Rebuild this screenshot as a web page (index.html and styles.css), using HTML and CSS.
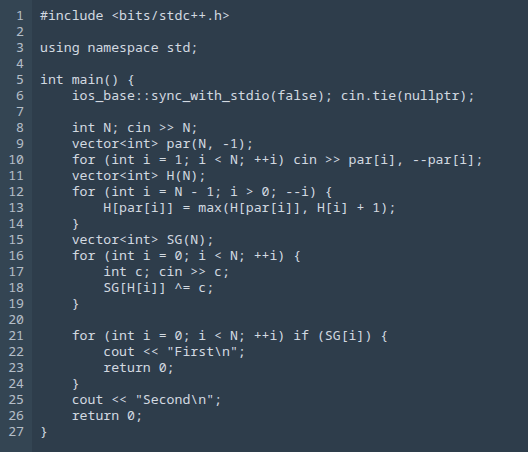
FILE: index.html
```html
<!DOCTYPE html>
<html>
<head>
<meta charset="utf-8">
<link rel="stylesheet" href="styles.css">
</head>
<body>
<div class="editor">
<pre class="gutter">1
2
3
4
5
6
7
8
9
10
11
12
13
14
15
16
17
18
19
20
21
22
23
24
25
26
27</pre>
<pre class="code">#include &lt;bits/stdc++.h&gt;

using namespace std;

int main() {
    ios_base::sync_with_stdio(false); cin.tie(nullptr);

    int N; cin &gt;&gt; N;
    vector&lt;int&gt; par(N, -1);
    for (int i = 1; i &lt; N; ++i) cin &gt;&gt; par[i], --par[i];
    vector&lt;int&gt; H(N);
    for (int i = N - 1; i &gt; 0; --i) {
        H[par[i]] = max(H[par[i]], H[i] + 1);
    }
    vector&lt;int&gt; SG(N);
    for (int i = 0; i &lt; N; ++i) {
        int c; cin &gt;&gt; c;
        SG[H[i]] ^= c;
    }

    for (int i = 0; i &lt; N; ++i) if (SG[i]) {
        cout &lt;&lt; "First\n";
        return 0;
    }
    cout &lt;&lt; "Second\n";
    return 0;
}</pre>
</div>
</body>
</html>
```
FILE: styles.css
```css
html, body {
  margin: 0;
  padding: 0;
  height: 100%;
  background: #2e3d4b;
}
.editor {
  display: flex;
  min-height: 452px;
  width: 528px;
  background: #2e3d4b;
}
pre {
  margin: 0;
  font-family: "Noto Sans Mono", "DejaVu Sans Mono", monospace;
  font-size: 13.2px;
  line-height: 16px;
  padding-top: 7px;
}
.gutter {
  width: 32px;
  box-sizing: border-box;
  padding-right: 8px;
  text-align: right;
  background: #344553;
  color: #b4bec8;
}
.code {
  padding-left: 8px;
  color: #d3dae1;
}
```
